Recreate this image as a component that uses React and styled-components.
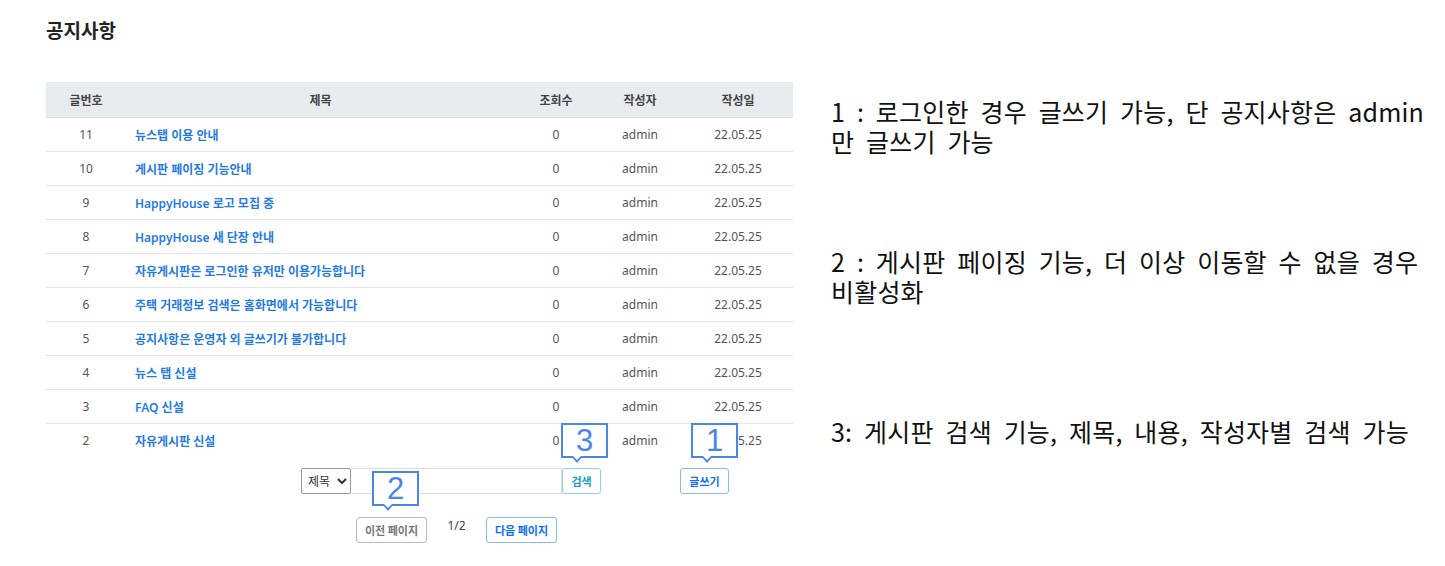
import React from "react";
import styled, { createGlobalStyle } from "styled-components";

const Global = createGlobalStyle`
  html, body { margin: 0; padding: 0; background: #fff; }
  body { font-family: "Noto Sans", "Noto Sans CJK KR", sans-serif; }
`;

const Page = styled.div`
  display: flex;
  align-items: flex-start;
  padding: 18px 0 0 46px;
`;

const Left = styled.div`
  position: relative;
  width: 747px;
  display: flex;
  flex-direction: column;
`;

const Title = styled.h2`
  margin: 0;
  height: 24px;
  line-height: 24px;
  font-size: 19px;
  font-weight: 700;
  color: #222;
  font-family: "Noto Sans CJK KR", sans-serif;
`;

const Table = styled.table`
  margin-top: 40px;
  width: 747px;
  border-collapse: collapse;
  table-layout: fixed;
  font-size: 12px;
  font-family: "Noto Sans", "Noto Sans CJK KR", sans-serif;
`;

const HeadCell = styled.th`
  width: ${(p) => p.$w}px;
  height: 35px;
  padding: 0;
  background: #e9ecef;
  color: #444;
  font-weight: 700;
  font-size: 12px;
  text-align: center;
  border-bottom: 1px solid #dee2e6;
  font-family: "Noto Sans CJK KR", sans-serif;
`;

const Row = styled.tr`
  height: 34px;
  border-bottom: 1px solid #e3e6e9;
  &:last-child { border-bottom: none; }
`;

const Cell = styled.td`
  padding: 0;
  text-align: center;
  color: #555;
`;

const TitleCell = styled.td`
  padding: 0 0 0 9px;
  text-align: left;
`;

const Link = styled.a`
  color: #1f7ae8;
  font-weight: 600;
  text-decoration: none;
  font-family: "Noto Sans", "Noto Sans CJK KR", sans-serif;
`;

const Controls = styled.div`
  display: flex;
  align-items: center;
  margin-top: 10px;
  padding-left: 255px;
  height: 26px;
`;

const SearchForm = styled.form`
  display: flex;
  align-items: stretch;
  height: 26px;
`;

const Select = styled.select`
  width: 50px;
  height: 26px;
  font-size: 12px;
  color: #333;
  border: 1px solid #999;
  border-radius: 2px;
  background: #fff;
  padding: 0 2px;
  font-family: "Noto Sans CJK KR", sans-serif;
`;

const Input = styled.input`
  width: 211px;
  box-sizing: border-box;
  height: 26px;
  border: 1px solid #dcdcdc;
  border-left: none;
  outline: none;
  margin: 0;
`;

const Btn = styled.button`
  height: 26px;
  padding: 0;
  width: ${(p) => p.$w}px;
  background: #fff;
  border: 1px solid ${(p) => p.$border};
  color: ${(p) => p.$color};
  border-radius: 3px;
  font-size: 11px;
  font-weight: 700;
  font-family: "Noto Sans CJK KR", sans-serif;
  cursor: pointer;
  margin-left: ${(p) => p.$ml || 0}px;
`;

const Pager = styled.div`
  display: flex;
  align-items: center;
  margin-top: 23px;
  padding-left: 310px;
  height: 26px;
`;

const PageInfo = styled.span`
  width: 59px;
  text-align: center;
  font-size: 12px;
  color: #444;
  margin-top: -8px;
`;

const Callout = styled.div`
  position: absolute;
  left: ${(p) => p.$x}px;
  top: ${(p) => p.$y}px;
  width: 47px;
  height: 35px;
  box-sizing: border-box;
  border: 2px solid #4a86e8;
  background: #fff;
  display: flex;
  align-items: center;
  justify-content: center;
  font-family: "Liberation Sans", Arial, sans-serif;
  font-size: 31px;
  color: #4a86e8;
  line-height: 1;
  &::before {
    content: "";
    position: absolute;
    left: 8px;
    bottom: -7px;
    border-left: 6px solid transparent;
    border-right: 6px solid transparent;
    border-top: 7px solid #4a86e8;
  }
  &::after {
    content: "";
    position: absolute;
    left: 10px;
    bottom: -4px;
    border-left: 4px solid transparent;
    border-right: 4px solid transparent;
    border-top: 4px solid #fff;
  }
`;

const Right = styled.div`
  margin-left: 38px;
  padding-top: 78px;
  display: flex;
  flex-direction: column;
`;

const Note = styled.p`
  margin: ${(p) => p.$mt}px 0 0 0;
  font-family: "Noto Sans CJK KR", sans-serif;
  font-size: 25px;
  line-height: 30px;
  color: #111;
  word-spacing: 6px;
  letter-spacing: 0.2px;
  white-space: nowrap;
`;

const rows = [
  [11, "뉴스탭 이용 안내"],
  [10, "게시판 페이징 기능안내"],
  [9, "HappyHouse 로고 모집 중"],
  [8, "HappyHouse 새 단장 안내"],
  [7, "자유게시판은 로그인한 유저만 이용가능합니다"],
  [6, "주택 거래정보 검색은 홈화면에서 가능합니다"],
  [5, "공지사항은 운영자 외 글쓰기가 불가합니다"],
  [4, "뉴스 탭 신설"],
  [3, "FAQ 신설"],
  [2, "자유게시판 신설"],
];

export default function App() {
  return (
    <>
      <Global />
      <Page>
        <Left>
          <Title>공지사항</Title>
          <Table>
            <thead>
              <tr>
                <HeadCell $w={80}>글번호</HeadCell>
                <HeadCell $w={389}>제목</HeadCell>
                <HeadCell $w={82}>조회수</HeadCell>
                <HeadCell $w={86}>작성자</HeadCell>
                <HeadCell $w={110}>작성일</HeadCell>
              </tr>
            </thead>
            <tbody>
              {rows.map(([n, t]) => (
                <Row key={n}>
                  <Cell>{n}</Cell>
                  <TitleCell>
                    <Link href="#">{t}</Link>
                  </TitleCell>
                  <Cell>0</Cell>
                  <Cell>admin</Cell>
                  <Cell>22.05.25</Cell>
                </Row>
              ))}
            </tbody>
          </Table>
          <Controls>
            <SearchForm onSubmit={(e) => e.preventDefault()}>
              <Select defaultValue="title">
                <option value="title">제목</option>
                <option value="content">내용</option>
                <option value="writer">작성자</option>
              </Select>
              <Input type="text" />
              <Btn $w={39} $border="#8dd3de" $color="#17a2b8">검색</Btn>
            </SearchForm>
            <Btn $w={49} $ml={79} $border="#8ab8f8" $color="#0d6efd">글쓰기</Btn>
          </Controls>
          <Pager>
            <Btn $w={71} $border="#bbb" $color="#777">이전 페이지</Btn>
            <PageInfo>1/2</PageInfo>
            <Btn $w={71} $border="#8ab8f8" $color="#0d6efd">다음 페이지</Btn>
          </Pager>
          <Callout $x={515} $y={405}>3</Callout>
          <Callout $x={645} $y={405}>1</Callout>
          <Callout $x={326} $y={453}>2</Callout>
        </Left>
        <Right>
          <Note $mt={0}>
            1 : 로그인한 경우 글쓰기 가능, 단 공지사항은 admin
            <br />만 글쓰기 가능
          </Note>
          <Note $mt={90}>
            2 : 게시판 페이징 기능, 더 이상 이동할 수 없을 경우
            <br />비활성화
          </Note>
          <Note $mt={110}>3: 게시판 검색 기능, 제목, 내용, 작성자별 검색 가능</Note>
        </Right>
      </Page>
    </>
  );
}
